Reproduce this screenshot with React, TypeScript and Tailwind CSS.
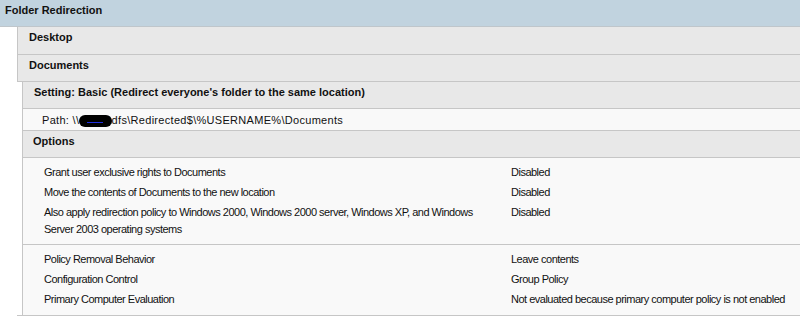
import React from "react";

type Opt = { label: React.ReactNode; value: string };

const options: Opt[] = [
    { label: "Grant user exclusive rights to Documents", value: "Disabled" },
    { label: "Move the contents of Documents to the new location", value: "Disabled" },
    {
        label: "Also apply redirection policy to Windows 2000, Windows 2000 server, Windows XP, and Windows Server 2003 operating systems",
        value: "Disabled",
    },
];

const behaviour: Opt[] = [
    { label: "Policy Removal Behavior", value: "Leave contents" },
    { label: "Configuration Control", value: "Group Policy" },
    { label: "Primary Computer Evaluation", value: "Not evaluated because primary computer policy is not enabled" },
];

const OptionRows = ({ rows }: { rows: Opt[] }) => (
    <div className="flex flex-col tracking-[-0.5px]">
        {rows.map((r, i) => (
            <div key={i} className="grid grid-cols-[467px_1fr] pt-[3px] leading-[17px]">
                <div className="pr-[30px]">{r.label}</div>
                <div className="whitespace-nowrap">{r.value}</div>
            </div>
        ))}
    </div>
);

const App = () => {
    return (
        <div className="w-[800px] h-[316px] bg-white text-[11px] text-[#111] font-['Liberation_Sans',Arial,sans-serif] overflow-hidden">
            {/* top section header */}
            <div className="h-[27px] bg-[#c1d3df] border-b border-[#bfc6cb] pl-[5px] pt-[3px] leading-[14px] font-bold">
                Folder Redirection
            </div>

            <div className="ml-[17px] border-b border-[#c6c6c6]">
                <div className="h-[28px] bg-[#e8e8e8] border-l border-b border-[#c6c6c6] pl-[11px] pt-[3px] leading-[14px] font-bold">
                    Desktop
                </div>
                <div className="h-[27px] bg-[#e8e8e8] border-l border-b border-[#c6c6c6] pl-[11px] pt-[3px] leading-[14px] font-bold">
                    Documents
                </div>

                <div className="ml-[5px] border-l border-[#c6c6c6]">
                    <div className="h-[27px] bg-[#e8e8e8] border-b border-[#c6c6c6] pl-[11px] pt-[3px] leading-[14px] font-bold">
                        Setting: Basic (Redirect everyone's folder to the same location)
                    </div>
                    <div className="h-[22px] bg-[#f9f9f9] border-b border-[#c6c6c6] pl-[19px] pt-[4px] leading-[14px] tracking-[0.3px]">
                        Path: \\
                        <span className="relative inline-block align-middle w-[33px] h-[12px] -mr-[4px] bg-black rounded-full">
                            <span className="absolute left-[8px] top-[7px] w-[16px] h-[1px] bg-[#2030e0]" />
                        </span>
                        \dfs\Redirected$\%USERNAME%\Documents
                    </div>
                    <div className="h-[27px] bg-[#e8e8e8] border-b border-[#c6c6c6] pl-[10px] pt-[3px] leading-[14px] font-bold">
                        Options
                    </div>
                    <div className="h-[87px] bg-[#f9f9f9] border-b border-[#c6c6c6] pl-[21px] pt-[3px]">
                        <OptionRows rows={options} />
                    </div>
                    <div className="h-[70px] bg-[#f9f9f9] pl-[21px] pt-[3px]">
                        <OptionRows rows={behaviour} />
                    </div>
                </div>
            </div>
        </div>
    );
};

export default App;
